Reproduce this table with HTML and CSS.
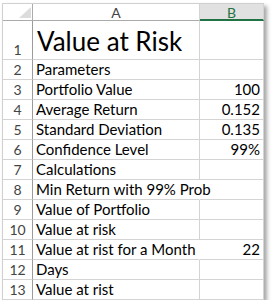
FILE: index.html
```html
<!DOCTYPE html>
<html>
<head>
<meta charset="utf-8">
<link rel="stylesheet" href="styles.css">
</head>
<body>
<div class="sheet">
  <div class="corner"><span class="corner-tri"></span></div>
  <div class="col-head">A</div>
  <div class="col-head selected">B</div>

  <div class="row-head tall">1</div>
  <div class="cell title tall">Value at Risk</div>
  <div class="cell num tall"></div>

  <div class="row-head">2</div>
  <div class="cell">Parameters</div>
  <div class="cell num"></div>

  <div class="row-head">3</div>
  <div class="cell">Portfolio Value</div>
  <div class="cell num">100</div>

  <div class="row-head">4</div>
  <div class="cell">Average Return</div>
  <div class="cell num">0.152</div>

  <div class="row-head">5</div>
  <div class="cell">Standard Deviation</div>
  <div class="cell num">0.135</div>

  <div class="row-head">6</div>
  <div class="cell">Confidence Level</div>
  <div class="cell num">99%</div>

  <div class="row-head">7</div>
  <div class="cell">Calculations</div>
  <div class="cell num"></div>

  <div class="row-head">8</div>
  <div class="cell spill">Min Return with 99% Prob</div>
  <div class="cell num"></div>

  <div class="row-head">9</div>
  <div class="cell">Value of Portfolio</div>
  <div class="cell num"></div>

  <div class="row-head">10</div>
  <div class="cell">Value at risk</div>
  <div class="cell num"></div>

  <div class="row-head">11</div>
  <div class="cell spill">Value at rist for a Month</div>
  <div class="cell num">22</div>

  <div class="row-head">12</div>
  <div class="cell">Days</div>
  <div class="cell num"></div>

  <div class="row-head">13</div>
  <div class="cell">Value at rist</div>
  <div class="cell num"></div>
</div>
</body>
</html>
```

FILE: styles.css
```css
html, body {
  margin: 0;
  padding: 0;
  background: #ffffff;
}

body {
  font-family: Lato, "Liberation Sans", sans-serif;
  font-size: 15px;
  color: #000;
}

.sheet {
  margin: 3px 0 0 2px;
  width: 261px;
  display: grid;
  grid-template-columns: 30px 167px 64px;
  grid-template-rows: 17px 39px repeat(12, 20px);
  border-top: 1px solid #d0d0d0;
  border-left: 1px solid #d0d0d0;
  box-sizing: content-box;
  box-shadow: 3px 3px 4px rgba(0, 0, 0, 0.35);
  background: #fff;
}

.sheet > div {
  box-sizing: border-box;
  border-right: 1px solid #d4d4d4;
  border-bottom: 1px solid #d4d4d4;
  overflow: visible;
  white-space: nowrap;
}

.corner {
  position: relative;
  border-right-color: #ababab !important;
  border-bottom-color: #ababab !important;
}

.corner-tri {
  position: absolute;
  right: 1px;
  bottom: 2px;
  width: 0;
  height: 0;
  border-left: 12px solid transparent;
  border-bottom: 11px solid #dcdcdc;
}

.col-head {
  display: flex;
  justify-content: center;
  align-items: center;
  font-size: 14px;
  color: #444;
  border-bottom-color: #ababab !important;
  padding-top: 1px;
}

.col-head.selected {
  background: #e1e1e1;
  color: #217346;
  border-bottom: 2px solid #217346 !important;
}

.row-head {
  display: flex;
  justify-content: center;
  align-items: flex-end;
  padding-bottom: 1px;
  color: #444;
  font-size: 14px;
  border-right-color: #9b9b9b !important;
}

.cell {
  display: flex;
  align-items: flex-end;
  padding: 0 3px 1px 3px;
  position: relative;
  z-index: 1;
}

.cell.spill {
  border-right-color: transparent !important;
}

.cell.num {
  justify-content: flex-end;
  z-index: 0;
}

.cell.title {
  font-size: 26px;
  padding-left: 4px;
  padding-bottom: 2px;
}
```
